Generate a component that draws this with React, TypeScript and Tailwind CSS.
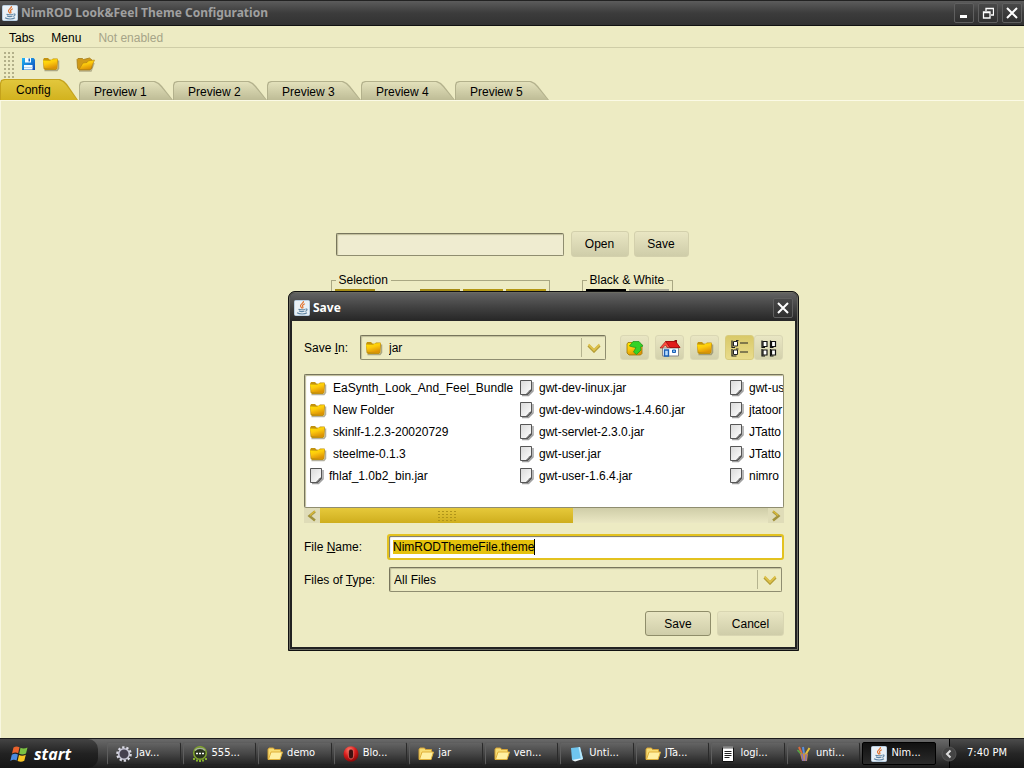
import React from "react";
import { clsx } from "clsx";

const uiFont = "font-['Liberation_Sans',Arial,sans-serif]";
const titleFont = "font-['Noto_Sans',sans-serif]";
const taskFont = "font-['DejaVu_Sans_Condensed','DejaVu_Sans',sans-serif]";

/* ---------- icons ---------- */

// Gradients shared by the icons below
const IconDefs = () => (
  <svg className="absolute h-0 w-0" aria-hidden="true">
    <defs>
      <linearGradient id="gold" x1="0" y1="0" x2="0.4" y2="1">
        <stop offset="0" stopColor="#ffea00" />
        <stop offset="0.5" stopColor="#fdca0d" />
        <stop offset="1" stopColor="#dd9406" />
      </linearGradient>
      <linearGradient id="page" x1="0" y1="0" x2="1" y2="1">
        <stop offset="0" stopColor="#d9d9d9" />
        <stop offset="1" stopColor="#ffffff" />
      </linearGradient>
      <linearGradient id="blue" x1="0" y1="0" x2="1" y2="1">
        <stop offset="0" stopColor="#20b8f5" />
        <stop offset="1" stopColor="#1048b8" />
      </linearGradient>
      <radialGradient id="red" cx="0.4" cy="0.25" r="0.8">
        <stop offset="0" stopColor="#ff7a6a" />
        <stop offset="0.5" stopColor="#d81c1c" />
        <stop offset="1" stopColor="#7d0505" />
      </radialGradient>
    </defs>
  </svg>
);

const JavaIcon = () => (
  <svg width="16" height="16" viewBox="0 0 16 16" className="shrink-0" aria-hidden="true">
    <rect x="0.5" y="0.5" width="15" height="15" rx="1" fill="#e9f0f6" stroke="#b9cfe2" />
    <path d="M9.5 1.2C10 3 6 4.200 6.500 6c.2 1 1.300 1.600 1.400 2.500M10.800 3.800C9 4.600 8 5.500 8.700 6.500c.4.700.4 1.200-.1 1.800" fill="none" stroke="#e2702a" strokeWidth="1.200" />
    <path d="M4.500 9.200c1.500.8 5.500.7 6.800-.1M5 11c1.600.7 4 .7 5.500.1M11.600 9c2-.5 1.900 1.800-.3 2.400M3 12.800c2.500 1.600 8 1.500 10 0" fill="none" stroke="#5f86a5" strokeWidth="1.100" />
  </svg>
);

const FolderIcon = () => (
  <svg width="18" height="16" viewBox="0 0 18 16" className="shrink-0" aria-hidden="true">
    <path d="M2.500 14.500h12.500l1.500-2V4.500" fill="none" stroke="#77704e" strokeOpacity="0.55" strokeWidth="1.500" />
    <path d="M1 4l1-2h4l1.500 1.500 2 .3L11 2.500h4.500l.5 1.500-.5 8.500-1.500 1.500H3L1.500 12.500z" fill="#c2920f" />
    <path d="M1 4.500l7 .3L10 3.500l5.300-.5-.5 8.500-1.300 1.500-11-1z" fill="url(#gold)" />
  </svg>
);

const OpenFolderIcon = () => (
  <svg width="20" height="16" viewBox="0 0 20 16" className="shrink-0" aria-hidden="true">
    <path d="M3 15h12l3-8" fill="none" stroke="#77704e" strokeOpacity="0.5" strokeWidth="1.500" />
    <path d="M1 3.500l1-1h4.500l1 1 6-1.500L16 4v8l-2 2H3L1.500 12z" fill="#cf9a18" stroke="#a57c1c" strokeWidth="0.800" />
    <path d="M3 13.500L7 7l4-.5 1.500-1.700 6-.8-3.500 8.500-1 1z" fill="url(#gold)" stroke="#b27f10" strokeWidth="0.600" />
  </svg>
);

const FloppyIcon = () => (
  <svg width="15" height="16" viewBox="0 0 15 16" className="shrink-0" aria-hidden="true">
    <path d="M1 2h11.500L14 3.500V14H1z" fill="url(#blue)" />
    <path d="M4 2h6v4.500H4z" fill="#f4fbff" />
    <path d="M7.500 2.500H9v3H7.500z" fill="#1667c5" />
    <path d="M3 9h8.500v4.500H3z" fill="#f4fbff" />
    <path d="M3 11.500h8.500" stroke="#b5d5ee" />
  </svg>
);

const FileIcon = () => (
  <svg width="16" height="18" viewBox="0 0 16 18" className="shrink-0" aria-hidden="true">
    <path d="M3 16.500h6.500L14 12V3" fill="none" stroke="#777" strokeOpacity="0.7" strokeWidth="1.500" />
    <path d="M1.500 1.500h11V11L8.500 15.500h-7z" fill="url(#page)" stroke="#565656" />
    <path d="M8 15.500l4.500-4.500" fill="none" stroke="#565656" strokeWidth="1.800" />
    <path d="M7.500 14.500c2-.5 2.700-1.800 3-3.500" fill="none" stroke="#8a8a8a" />
  </svg>
);

const UpFolderIcon = () => (
  <svg width="20" height="18" viewBox="0 0 20 18" aria-hidden="true">
    <path d="M2 5l1-1.500h5v2h9v9l-1.500 1.500H4L2 14z" fill="url(#gold)" stroke="#9b7508" strokeWidth="0.800" />
    <path d="M4.500 7L8 2.500h6L18 7l-2.500.8.500 3.200-4.500 4.500L8.500 13l2.500-4.500L8 8z" fill="#33d326" stroke="#259a22" strokeWidth="0.800" />
  </svg>
);

const HomeIcon = () => (
  <svg width="22" height="20" viewBox="0 0 22 20" aria-hidden="true">
    <path d="M3.500 10h16v8h-16z" fill="#fff" stroke="#888" />
    <path d="M15.500 2h2.500v5h-2.500z" fill="#8e1111" />
    <path d="M6.500 3.500h10L21 9.500H11z" fill="#e11b1b" stroke="#a70f0f" />
    <path d="M6.500 3.500L11 9.500H8L6.500 7l-3 3H1z" fill="#ff4c3c" stroke="#8e1111" strokeWidth="0.600" />
    <path d="M5.500 12h4v6h-4z" fill="#b9dcfb" stroke="#1b5fb4" strokeWidth="1.400" />
    <path d="M13.500 12h3v2.500h-3z" fill="#7fbcf5" stroke="#1b5fb4" />
  </svg>
);

const ListViewIcon = () => (
  <svg width="20" height="18" viewBox="0 0 20 18" aria-hidden="true">
    <path d="M3.500 2.500h4v4.500h-4zM3.500 11h4v4.500h-4z" fill="#fff" stroke="#222" />
    <path d="M2 1.500v7h3M2 10v7h4.500M6 1.500h2.500M6 10h2.500M10 4h8M10 13h8" fill="none" stroke="#222" strokeWidth="1.200" />
  </svg>
);

const GridViewIcon = () => (
  <svg width="18" height="18" viewBox="0 0 18 18" aria-hidden="true">
    <path d="M3 2.500h4V7.500H3zM3 11h4v5H3zM11.500 2.500h4V7.500h-4zM11.500 11h4v5h-4z" fill="#fff" stroke="#111" strokeWidth="1.200" />
    <path d="M2 1.500V8.500h3M2 10v7h3M10.500 1.500V8.500h3M10.500 10v7h3" fill="none" stroke="#111" strokeWidth="1.200" />
  </svg>
);

const Chevron = () => (
  <svg width="14" height="10" viewBox="0 0 14 10" aria-hidden="true">
    <path d="M1.500 2.500L7 8l5.500-5.500" fill="none" stroke="#b39c35" strokeWidth="3" />
    <path d="M1.500 1.500L7 7l5.500-5.500" fill="none" stroke="#dcc04a" strokeWidth="2" />
  </svg>
);

const ScrollArrow = ({ right = false }: { right?: boolean }) => (
  <svg width="10" height="12" viewBox="0 0 10 12" aria-hidden="true">
    <path d={right ? "M2 1.500L7.500 6 2 10.500" : "M8 1.500L2.500 6 8 10.500"} fill="none" stroke="#a1923c" strokeWidth="2.500" />
    <path d={right ? "M2 1L7 5.500" : "M8 1L3 5.500"} fill="none" stroke="#d8ba3a" strokeWidth="1.500" />
  </svg>
);

const WindowsLogo = () => (
  <svg width="20" height="20" viewBox="0 0 20 20" aria-hidden="true">
    <path d="M3.500 3.500c2-1.300 4-1.300 6-.2l-1.300 6c-2-1-4-.9-6.200.3z" fill="#e9622c" />
    <path d="M10.500 3.800c2 1 4.500.9 7-.3l-1.500 6c-2.200 1.100-4.500 1.200-6.800.2z" fill="#7cc243" />
    <path d="M1.800 10.800c2.100-1.200 4-1.300 6.100-.3l-1.300 6c-2-1-4.100-.9-6.300.4z" fill="#4b8be0" />
    <path d="M9 11c2 1 4.500.9 6.800-.2l-1.500 6c-2.100 1.200-4.500 1.200-6.700.2z" fill="#f9c623" />
  </svg>
);

const GearIcon = () => (
  <svg width="16" height="16" viewBox="0 0 16 16" aria-hidden="true">
    <circle cx="8" cy="8" r="6.600" fill="none" stroke="#dcdce6" strokeWidth="2.400" strokeDasharray="2.300 1.850" />
    <circle cx="8" cy="8" r="5.300" fill="#45404f" stroke="#c9c8d8" strokeWidth="1.600" />
  </svg>
);

const RobotIcon = () => (
  <svg width="16" height="16" viewBox="0 0 16 16" aria-hidden="true">
    <circle cx="8" cy="7" r="6.300" fill="#2b3420" stroke="#7fa32c" strokeWidth="1.500" />
    <path d="M3 4.500c2-3 8-3 10 0" stroke="#a9b59a" strokeWidth="1.500" fill="none" />
    <path d="M4 7.500h2M7 7.500h2M10 7.500h2" stroke="#fff" strokeWidth="1.500" />
    <path d="M2 12v2M5 13.500v2M8 14v2M11 13.500v2M14 12v2" stroke="#9cd32b" strokeWidth="1.600" />
  </svg>
);

const XpFolderIcon = () => (
  <svg width="16" height="16" viewBox="0 0 16 16" aria-hidden="true">
    <path d="M1 13.500V3.500L2 2h4.500l1 1.500H13.500V6L13 13.500z" fill="#f7dc72" stroke="#d3a236" />
    <path d="M1.500 13.500L4 6h11.500L13 13.500z" fill="#fff0a2" stroke="#dfb03a" />
  </svg>
);

const OperaIcon = () => (
  <svg width="16" height="16" viewBox="0 0 16 16" aria-hidden="true">
    <ellipse cx="8" cy="8" rx="7.500" ry="7.800" fill="url(#red)" />
    <ellipse cx="8" cy="8" rx="2.700" ry="5" fill="#3e1010" stroke="#ef6c60" strokeWidth="0.800" />
  </svg>
);

const NotebookIcon = () => (
  <svg width="16" height="16" viewBox="0 0 16 16" aria-hidden="true">
    <path d="M2 2l9-1 3 12-8 1.500-3-.5z" fill="#6fc5ee" />
    <path d="M11 1l3 12-2 .4L9.500 1.200z" fill="#b9e8fb" />
    <path d="M3 14l8-1.500 3 .5-8 2.500z" fill="#e8f5fa" />
  </svg>
);

const NotepadIcon = () => (
  <svg width="16" height="16" viewBox="0 0 16 16" aria-hidden="true">
    <path d="M2.500 2h11v13.500h-11z" fill="#fff" stroke="#111" />
    <path d="M4 .5v2.500M6 .5v2.500M8 .5v2.500M10 .5v2.500M12 .5v2.500" stroke="#ddd" />
    <path d="M4.500 5.500h7M4.500 7.500h7M4.500 9.500h7M4.500 11.500h5" stroke="#222" />
  </svg>
);

const PaintIcon = () => (
  <svg width="16" height="16" viewBox="0 0 16 16" aria-hidden="true">
    <path d="M3 1l3 7" stroke="#d96b3d" strokeWidth="2" />
    <path d="M7 1l1 7" stroke="#5a8fdc" strokeWidth="2" />
    <path d="M13.500 2L9.500 8.500" stroke="#e5c23a" strokeWidth="2" />
    <path d="M1.500 4L5 8" stroke="#58a845" strokeWidth="1.500" />
    <path d="M4 7.500h8l-1 7.500H6z" fill="#c99045" />
    <path d="M6 8l1 7M10 8.500L9.500 15" stroke="#806ec2" strokeWidth="1.500" />
  </svg>
);

const CloseGlyph = () => (
  <svg width="12" height="12" viewBox="0 0 12 12" aria-hidden="true">
    <path d="M1 1l10 10M11 1L1 11" stroke="#fff" strokeWidth="2" />
  </svg>
);

/* ---------- shared controls ---------- */

const frame =
  "rounded-[2px] border border-[#8f8d70] border-t-[#77755c] border-l-[#77755c] shadow-[inset_1px_1px_1px_#bfbd99]";

const Button = ({ children, className }: { children: React.ReactNode; className?: string }) => (
  <button
    type="button"
    className={clsx(
      "rounded-[3px] border bg-linear-to-b from-[#e9e6c3] to-[#cfcda9] text-center text-black",
      className
    )}
  >
    {children}
  </button>
);

const ToolButton = ({ label, pressed, children }: { label: string; pressed?: boolean; children: React.ReactNode }) => (
  <button
    type="button"
    aria-label={label}
    className={clsx(
      "flex h-[25px] w-[29px] items-center justify-center rounded-[3px] border",
      pressed
        ? "border-[#d8cb7c] bg-linear-to-b from-[#d9c968] to-[#e9dc8c]"
        : "border-[#dad7b4] bg-linear-to-b from-[#e9e6c3] to-[#d3d1ac]"
    )}
  >
    {children}
  </button>
);

const WindowButton = ({ label, children }: { label: string; children: React.ReactNode }) => (
  <button
    type="button"
    aria-label={label}
    className="flex h-5 w-5 items-center justify-center rounded-[2px] border border-[#5f5f5f] bg-linear-to-b from-[#484848] to-[#303030]"
  >
    {children}
  </button>
);

const ComboBox = ({ id, value, icon }: { id: string; value: string; icon?: React.ReactNode }) => (
  <div className={clsx("relative flex h-[25px] items-center bg-[#edebc3]", frame)}>
    {icon && <span className="pointer-events-none absolute left-1">{icon}</span>}
    <select id={id} className={clsx("h-full w-full appearance-none bg-transparent pr-7 outline-none", icon ? "pl-7" : "pl-1")}>
      <option>{value}</option>
    </select>
    <span className="pointer-events-none absolute right-0 flex h-[19px] w-6 items-center justify-center border-l border-[#b5b38f]">
      <Chevron />
    </span>
  </div>
);

/* ---------- main window ---------- */

const TitleBar = () => (
  <header className="flex h-[26px] shrink-0 items-center gap-[3px] border-t border-b border-t-[#222] border-b-[#111] bg-linear-to-b from-[#5c5c5c] via-[#3c3c3c] to-[#323232] pr-0.5 pl-0.5">
    <JavaIcon />
    <h1 className={clsx("grow text-[12px] font-bold text-[#a0a0a0]", titleFont)}>NimROD Look&amp;Feel Theme Configuration</h1>
    <div className="flex gap-1">
      <WindowButton label="Minimize">
        <svg width="12" height="12" viewBox="0 0 12 12" aria-hidden="true">
          <path d="M2 9.500h7" stroke="#fff" strokeWidth="3" />
        </svg>
      </WindowButton>
      <WindowButton label="Restore">
        <svg width="12" height="12" viewBox="0 0 12 12" aria-hidden="true">
          <path d="M4 4V1.500h7.500V8H9M1.500 5H8v6H1.500zM1 5.500h7" fill="none" stroke="#fff" strokeWidth="1.300" />
        </svg>
      </WindowButton>
      <WindowButton label="Close">
        <CloseGlyph />
      </WindowButton>
    </div>
  </header>
);

const MenuBar = () => (
  <nav className="flex h-[22px] shrink-0 items-center gap-[17px] border-b border-[#cfcda7] pt-0.5 pl-[9px]">
    <button type="button">Tabs</button>
    <button type="button">Menu</button>
    <button type="button" disabled className="text-[#a6a488]">
      Not enabled
    </button>
  </nav>
);

const ToolBar = () => (
  <div className="flex h-8 shrink-0 items-center pl-[3px]">
    <span className="h-[27px] w-3 bg-[radial-gradient(#b3b08a_1px,transparent_1px)] bg-[size:4px_4px]" />
    <button type="button" aria-label="Save theme" className="ml-1.5">
      <FloppyIcon />
    </button>
    <button type="button" aria-label="Open theme" className="ml-1.5">
      <FolderIcon />
    </button>
    <button type="button" aria-label="Open folder" className="ml-4">
      <OpenFolderIcon />
    </button>
  </div>
);

const tabs = ["Config", "Preview 1", "Preview 2", "Preview 3", "Preview 4", "Preview 5"];

const tabShape =
  "[clip-path:polygon(0_4px,1px_1px,4px_0,calc(100%_-_18px)_0,calc(100%_-_14px)_2px,calc(100%_-_11px)_5px,100%_100%,0_100%)]";

const TabStrip = () => (
  <div role="tablist" className="flex h-[21px] shrink-0 items-end border-b border-[#fbfae6]">
    {tabs.map((tab, i) => (
      <button
        key={tab}
        type="button"
        role="tab"
        aria-selected={i === 0}
        className={clsx(
          "p-px pb-0",
          tabShape,
          i === 0 ? "mr-px h-[21px] w-[78px] bg-[#c4a21c]" : "h-[19px] w-[94px] bg-[#b3b18c]"
        )}
      >
        <span
          className={clsx(
            "block h-full bg-linear-to-b text-left",
            tabShape,
            i === 0 ? "from-[#e2c73c] to-[#d2b21d] pl-[15px] leading-[21px]" : "from-[#e3e1bb] to-[#bebc96] pl-3.5 leading-5"
          )}
        >
          {tab}
        </span>
      </button>
    ))}
  </div>
);

const Swatch = ({ label, className }: { label: string; className: string }) => (
  <button type="button" aria-label={label} className={clsx("h-5 w-10", className)} />
);

const ConfigPanel = () => (
  <main className="flex grow flex-col items-center border-l border-[#f8f7e0] pt-[130px] pr-1.5">
    <div className="flex w-[358px] flex-col gap-[15px]">
      <div className="flex items-center pl-[5px]">
        <input type="text" aria-label="Theme file" className={clsx("mr-[7px] h-[23px] min-w-0 grow bg-[#efecd0]", frame)} />
        <Button className="mr-[5px] h-[26px] w-[58px] border-[#d3d0ac]">Open</Button>
        <Button className="h-[26px] w-[55px] border-[#d3d0ac]">Save</Button>
      </div>
      <div className="flex items-start justify-between pr-4">
        <fieldset className="w-[219px] border border-[#a9a783] px-[3px] pb-2">
          <legend className="ml-px px-[3px] leading-[17px]">Selection</legend>
          <div className="flex gap-[3px]">
            <Swatch label="Primary 1" className="mr-auto bg-[#a48a14]" />
            <Swatch label="Primary 2" className="bg-[#a48a14]" />
            <Swatch label="Primary 3" className="bg-[#b39612]" />
            <Swatch label="Primary 4" className="bg-[#b39612]" />
          </div>
        </fieldset>
        <fieldset className="w-[90px] border border-[#a9a783] px-[3px] pb-2">
          <legend className="ml-px px-[3px] leading-[17px] whitespace-nowrap">Black &amp; White</legend>
          <div className="flex gap-[3px]">
            <Swatch label="Black" className="bg-black" />
            <Swatch label="White" className="bg-[#b0ae99]" />
          </div>
        </fieldset>
      </div>
    </div>
  </main>
);

/* ---------- save dialog ---------- */

interface FileEntry {
  name: string;
  folder?: boolean;
}

const columns: FileEntry[][] = [
  [
    { name: "EaSynth_Look_And_Feel_Bundle", folder: true },
    { name: "New Folder", folder: true },
    { name: "skinlf-1.2.3-20020729", folder: true },
    { name: "steelme-0.1.3", folder: true },
    { name: "fhlaf_1.0b2_bin.jar" },
  ],
  [
    { name: "gwt-dev-linux.jar" },
    { name: "gwt-dev-windows-1.4.60.jar" },
    { name: "gwt-servlet-2.3.0.jar" },
    { name: "gwt-user.jar" },
    { name: "gwt-user-1.6.4.jar" },
  ],
  [{ name: "gwt-us" }, { name: "jtatoor" }, { name: "JTatto" }, { name: "JTatto" }, { name: "nimro" }],
];

const FileList = () => (
  <div className="mt-3.5">
    <div className={clsx("flex h-[134px] overflow-hidden bg-white pt-0.5 pl-1", frame)}>
      {columns.map((files, i) => (
        <ul key={i} className="w-[210px] shrink-0">
          {files.map((file, j) => (
            <li key={j} className={clsx("flex h-[22px] items-center whitespace-nowrap", file.folder ? "gap-1.5" : "gap-1")}>
              {file.folder ? <FolderIcon /> : <FileIcon />}
              {file.name}
            </li>
          ))}
        </ul>
      ))}
    </div>
    <div className="flex h-[15px] bg-linear-to-b from-[#cfcda8] to-[#ebe8c4]">
      <button type="button" aria-label="Scroll left" className="flex w-4 items-center justify-center bg-[#dfdcb8]">
        <ScrollArrow />
      </button>
      <div className="grow">
        <div className="flex h-full w-[253px] items-center justify-center bg-linear-to-b from-[#e6c93a] to-[#cfae1c]">
          <span className="h-3 w-5 bg-[radial-gradient(#b0951a_1px,transparent_1px)] bg-[size:4px_3px]" />
        </div>
      </div>
      <button type="button" aria-label="Scroll right" className="flex w-4 items-center justify-center bg-[#dfdcb8]">
        <ScrollArrow right />
      </button>
    </div>
  </div>
);

const SaveDialog = () => (
  <section
    role="dialog"
    aria-label="Save"
    className="absolute top-[291px] left-[288px] w-[511px] rounded-t-[7px] border border-[#111] bg-[#222]"
  >
    <div className="rounded-t-[6px] border border-[#6c6c63]">
      <div className="flex h-7 items-center gap-[3px] rounded-t-[5px] bg-linear-to-b from-[#626262] via-[#424242] to-[#262626] pt-0.5 pr-1 pl-1">
        <JavaIcon />
        <h2 className={clsx("grow text-[12px] font-bold text-white", titleFont)}>Save</h2>
        <WindowButton label="Close dialog">
          <CloseGlyph />
        </WindowButton>
      </div>
      <form className="mx-0.5 mb-0.5 bg-[#edebc3] pt-3.5 pr-[11px] pb-[11px] pl-3" onSubmit={(e) => e.preventDefault()}>
        <div className="flex items-center pr-px">
          <label htmlFor="save-in" className="w-14">
            Save <u>I</u>n:
          </label>
          <div className="mr-3.5 grow">
            <ComboBox id="save-in" value="jar" icon={<FolderIcon />} />
          </div>
          <div className="flex gap-1.5">
            <ToolButton label="Up one level">
              <UpFolderIcon />
            </ToolButton>
            <ToolButton label="Home">
              <HomeIcon />
            </ToolButton>
            <ToolButton label="New folder">
              <FolderIcon />
            </ToolButton>
            <div className="flex">
              <ToolButton label="List" pressed>
                <ListViewIcon />
              </ToolButton>
              <ToolButton label="Details">
                <GridViewIcon />
              </ToolButton>
            </div>
          </div>
        </div>

        <FileList />

        <div className="mt-[11px] flex items-center">
          <label htmlFor="file-name" className="w-[83px]">
            File <u>N</u>ame:
          </label>
          <div className="relative flex grow items-center">
            <input
              id="file-name"
              type="text"
              autoFocus
              onFocus={(e) => e.target.select()}
              defaultValue="NimRODThemeFile.theme"
              className="h-[26px] w-full rounded-[3px] border-2 border-[#e3c21f] bg-white pl-1 shadow-[inset_1px_1px_1px_#77755c] outline-none selection:bg-[#e5c20c] selection:text-black"
            />
            <span className="pointer-events-none absolute left-[147px] h-4 w-px bg-black" />
          </div>
        </div>
        <div className="mt-[7px] flex items-center">
          <label htmlFor="file-type" className="w-[85px]">
            Files of <u>T</u>ype:
          </label>
          <div className="mr-0.5 grow">
            <ComboBox id="file-type" value="All Files" />
          </div>
        </div>
        <div className="mt-[19px] flex justify-end gap-1.5">
          <Button className="h-[25px] w-[66px] border-[#8f8d6a]">Save</Button>
          <Button className="h-[25px] w-[67px] border-[#d9d6b2]">Cancel</Button>
        </div>
      </form>
    </div>
  </section>
);

/* ---------- taskbar ---------- */

const tasks = [
  { label: "Jav...", icon: <GearIcon /> },
  { label: "555...", icon: <RobotIcon /> },
  { label: "demo", icon: <XpFolderIcon /> },
  { label: "Blo...", icon: <OperaIcon /> },
  { label: "jar", icon: <XpFolderIcon /> },
  { label: "ven...", icon: <XpFolderIcon /> },
  { label: "Unti...", icon: <NotebookIcon /> },
  { label: "JTa...", icon: <XpFolderIcon /> },
  { label: "logi...", icon: <NotepadIcon /> },
  { label: "unti...", icon: <PaintIcon /> },
  { label: "Nim...", icon: <JavaIcon />, active: true },
];

const Taskbar = () => (
  <footer className={clsx("flex h-[30px] shrink-0 border-t border-[#1b1b1b] bg-linear-to-b from-[#6a6a6a] via-[#444] to-[#1c1c1c] text-[11px] text-white", taskFont)}>
    <button
      type="button"
      className="flex w-[98px] items-center gap-1 rounded-r-[10px] bg-linear-to-b from-[#444] via-[#222] to-[#151515] pl-2.5 font-['Open_Sans',sans-serif] text-[16px] font-bold italic"
    >
      <WindowsLogo />
      start
    </button>
    <div className="ml-[9px] flex grow gap-0.5 py-[3px]">
      {tasks.map((task) => (
        <button
          key={task.label}
          type="button"
          className={clsx(
            "flex min-w-0 flex-1 items-center gap-1 rounded-[2px] border pl-2 whitespace-nowrap",
            task.active
              ? "border-black bg-linear-to-b from-[#111] to-[#2b2b2b]"
              : "border-[#5e5e5e] border-r-[#2a2a2a] border-b-[#222] bg-linear-to-b from-[#646464] via-[#474747] to-[#262626]"
          )}
        >
          {task.icon}
          {task.label}
        </button>
      ))}
    </div>
    <button type="button" aria-label="Show hidden icons" className="z-10 ml-[5px] flex items-center">
      <svg width="16" height="16" viewBox="0 0 16 16" aria-hidden="true">
        <circle cx="8" cy="8" r="7" fill="#444" stroke="#555" />
        <path d="M9.500 4.500L6 8l3.500 3.500" fill="none" stroke="#ddd" strokeWidth="2" />
      </svg>
    </button>
    <div className="-ml-2 flex w-[75px] items-center justify-center border-l border-black bg-linear-to-b from-[#4c4c4c] via-[#262626] to-[#141414]">
      <time>7:40 PM</time>
    </div>
  </footer>
);

const App: React.FC = () => {
  return (
    <div className={clsx("relative flex h-screen flex-col overflow-hidden bg-[#edebc3] text-[12px] text-black", uiFont)}>
      <IconDefs />
      <TitleBar />
      <MenuBar />
      <ToolBar />
      <TabStrip />
      <ConfigPanel />
      <SaveDialog />
      <Taskbar />
    </div>
  );
};

export default App;
